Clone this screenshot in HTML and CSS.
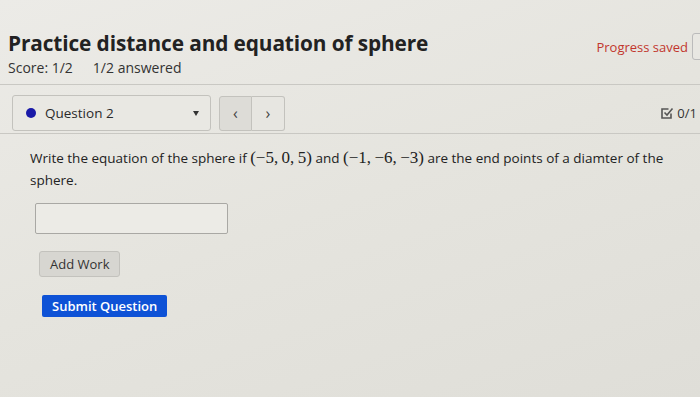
FILE: index.html
```html
<!DOCTYPE html>
<html>
<head>
<meta charset="utf-8">
<link rel="stylesheet" href="styles.css">
</head>
<body>
<div class="page">
  <header class="head">
    <div class="head-left">
      <h1 class="title">Practice distance and equation of sphere</h1>
      <div class="score"><span>Score: 1/2</span><span>1/2 answered</span></div>
    </div>
    <div class="head-right">
      <span class="saved">Progress saved</span>
      <span class="done-btn"></span>
    </div>
  </header>
  <div class="qbar">
    <div class="qselect">
      <span class="dot"></span>
      <span class="qname">Question 2</span>
      <span class="caret"></span>
    </div>
    <div class="nav">
      <span class="navbtn prev">&#8249;</span>
      <span class="navbtn next">&#8250;</span>
    </div>
    <div class="points">
      <svg width="14" height="14" viewBox="0 0 14 14"><path d="M11 7.5V12H2V3h6.5" fill="none" stroke="#555" stroke-width="1.6"/><path d="M4.5 6.5l2.5 2.5 5.5-6.5" fill="none" stroke="#555" stroke-width="1.6"/></svg>
      <span>0/1</span>
    </div>
  </div>
  <section class="question">
    <p class="qtext"><span class="txt">Write the equation of the sphere if</span> <span class="math">(−5,&thinsp;0,&thinsp;5)</span> <span class="txt">and</span> <span class="math">(−1,&thinsp;−6,&thinsp;−3)</span> <span class="txt">are the end points of a diamter of the</span> <span class="txt">sphere.</span></p>
    <div class="answer"></div>
    <div class="addwork">Add Work</div>
    <div class="submit">Submit Question</div>
  </section>
</div>
</body>
</html>
```
FILE: styles.css
```css
html, body {
  margin: 0;
  padding: 0;
}
body {
  width: 700px;
  height: 397px;
  overflow: hidden;
  background: linear-gradient(160deg, #ecebe7 0%, #e5e4de 50%, #dfded8 100%);
  font-family: "Open Sans", "DejaVu Sans", sans-serif;
  color: #222;
}
.page {
  padding-top: 29px;
}
.head {
  display: flex;
  justify-content: space-between;
  align-items: flex-start;
  padding-left: 8px;
  border-bottom: 1px solid #c9c8c3;
  padding-bottom: 7px;
}
.title {
  margin: 0;
  font-size: 20.8px;
  font-weight: 700;
  line-height: 28px;
  color: #222;
  letter-spacing: -0.1px;
}
.score {
  margin-top: 2px;
  font-size: 14px;
  line-height: 18px;
  color: #333;
  display: flex;
  gap: 20px;
}
.head-right {
  display: flex;
  align-items: center;
  gap: 4px;
  margin-top: 4px;
}
.saved {
  color: #c2362d;
  font-size: 13px;
}
.done-btn {
  width: 20px;
  height: 25px;
  border: 1px solid #bbb;
  border-radius: 3px;
  background: #e8e7e2;
  margin-right: -14px;
}
.qbar {
  display: flex;
  align-items: center;
  padding: 10px 3px 2px 12px;
  border-bottom: 1px solid #c9c8c3;
}
.qselect {
  width: 199px;
  height: 36px;
  box-sizing: border-box;
  border: 1px solid #c3c2bd;
  border-radius: 3px;
  background: #e9e8e3;
  display: flex;
  align-items: center;
  padding: 0 11px 0 13px;
}
.dot {
  width: 10px;
  height: 10px;
  border-radius: 50%;
  background: #1a1aa8;
  margin-right: 9px;
}
.qname {
  font-size: 13.5px;
  color: #2a2a2a;
  flex: 1;
}
.caret {
  width: 0;
  height: 0;
  border-left: 3.5px solid transparent;
  border-right: 3.5px solid transparent;
  border-top: 5px solid #333;
}
.nav {
  display: flex;
  margin-left: 8px;
  height: 35px;
}
.navbtn {
  width: 33px;
  box-sizing: border-box;
  border: 1px solid #c3c2bd;
  display: flex;
  align-items: center;
  justify-content: center;
  font-size: 16px;
  color: #444;
}
.prev {
  background: #dddcd7;
  border-radius: 3px 0 0 3px;
}
.next {
  background: #e7e6e1;
  border-left: none;
  border-radius: 0 3px 3px 0;
}
.points {
  margin-left: auto;
  display: flex;
  align-items: center;
  gap: 3px;
  font-size: 13px;
  color: #333;
}
.question {
  padding: 13px 20px 0 30px;
  width: 645px;
}
.qtext {
  margin: 0;
  font-size: 13.5px;
  line-height: 22px;
  color: #222;
}
.math {
  font-family: "Liberation Serif", "DejaVu Serif", serif;
  font-size: 17px;
  line-height: 20px;
}
.answer {
  margin: 12px 0 0 5px;
  width: 193px;
  height: 31px;
  box-sizing: border-box;
  border: 1px solid #a9a8a4;
  border-radius: 2px;
  background: #ecebe6;
}
.addwork {
  display: inline-block;
  margin: 17px 0 0 9px;
  padding: 0 10px;
  height: 24px;
  line-height: 24px;
  border: 1px solid #c3c2bd;
  border-radius: 3px;
  background: #d7d6d1;
  font-size: 13px;
  color: #333;
}
.submit {
  display: block;
  width: fit-content;
  margin: 18px 0 0 12px;
  padding: 0 10px;
  height: 22px;
  line-height: 22px;
  border-radius: 2px;
  background: #0e52d6;
  color: #fff;
  font-size: 13px;
  font-weight: 600;
}
```
